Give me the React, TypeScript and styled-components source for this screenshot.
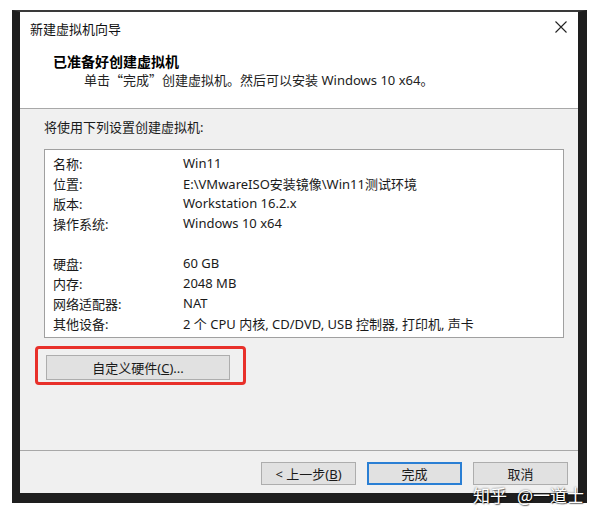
import React from 'react';
import styled, { createGlobalStyle } from 'styled-components';

const GlobalStyle = createGlobalStyle`
  body {
    margin: 0;
    background: #ffffff;
    font-family: 'Segoe UI', 'Noto Sans', 'Noto Sans CJK SC', sans-serif;
    font-size: 13px;
    color: #1a1a1a;
  }
`;

interface Setting {
  label: string;
  value: string;
}

const settings: (Setting | null)[] = [
  { label: '名称:', value: 'Win11' },
  { label: '位置:', value: 'E:\\VMwareISO安装镜像\\Win11测试环境' },
  { label: '版本:', value: 'Workstation 16.2.x' },
  { label: '操作系统:', value: 'Windows 10 x64' },
  null,
  { label: '硬盘:', value: '60 GB' },
  { label: '内存:', value: '2048 MB' },
  { label: '网络适配器:', value: 'NAT' },
  { label: '其他设备:', value: '2 个 CPU 内核, CD/DVD, USB 控制器, 打印机, 声卡' }
];

const Page = styled.div`
  position: relative;
  padding: 10px 13px 14px 12px;
`;

const Window = styled.div`
  box-sizing: border-box;
  height: 493px;
  display: flex;
  flex-direction: column;
  border-top: 2px solid #3a3a3a;
  border-left: 8px solid #1e1e1e;
  border-right: 9px solid #1e1e1e;
  border-bottom: 10px solid #1e1e1e;
`;

const Header = styled.div`
  box-sizing: border-box;
  height: 97px;
  background: #ffffff;
  border-bottom: 1px solid #a8a8a8;
`;

const TitleRow = styled.div`
  height: 32px;
  display: flex;
  align-items: center;
  justify-content: space-between;
  padding: 0 11px 0 10px;
`;

const TitleText = styled.span`
  color: #111;
`;

const CloseIcon = styled.svg`
  width: 12px;
  height: 12px;
  margin-top: -2px;
`;

const Heading = styled.div`
  margin-top: 9px;
  padding-left: 33px;
  line-height: 18px;
  font-size: 14px;
  font-weight: bold;
  color: #000;
`;

const SubHeading = styled.div`
  padding-left: 64px;
  line-height: 18px;
  color: #222;
`;

// full-width punctuation comes from the CJK face
const Cjk = styled.span`
  font-family: 'Noto Sans CJK SC', sans-serif;
`;

const Body = styled.div`
  flex: 1;
  background: #f0f0f0;
  padding: 9px 14px 0 24px;
`;

const Intro = styled.div`
  line-height: 18px;
  margin-bottom: 13px;
`;

const SettingsBox = styled.div`
  box-sizing: border-box;
  height: 189px;
  background: #ffffff;
  border: 1px solid #a0a0a0;
  padding: 3px 8px;
`;

const SettingRow = styled.div`
  display: flex;
  height: 20px;
  align-items: center;
`;

const Label = styled.span`
  width: 130px;
  flex-shrink: 0;
`;

const Highlight = styled.div`
  box-sizing: border-box;
  width: 211px;
  height: 39px;
  margin: 8px 0 0 -9px;
  border: 3px solid #e8302a;
  border-radius: 4px;
  padding: 6px 0 0 8px;
`;

const Button = styled.button<{ $primary?: boolean; $width?: number }>`
  box-sizing: border-box;
  width: ${(p) => p.$width ?? 95}px;
  height: ${(p) => (p.$width ? 25 : 23)}px;
  background: #e1e1e1;
  border: ${(p) => (p.$primary ? '2px solid #2a7fd4' : '1px solid #adadad')};
  font-family: inherit;
  font-size: 13px;
  color: #1a1a1a;
  padding: 0;
  display: flex;
  align-items: center;
  justify-content: center;
`;

const Key = styled.span`
  text-decoration: underline;
`;

const Footer = styled.div`
  box-sizing: border-box;
  height: 43px;
  background: #f0f0f0;
  border-top: 1px solid #a8a8a8;
  display: flex;
  justify-content: flex-end;
  align-items: flex-start;
  padding: 11px 10px 0 0;
  gap: 11px;
`;

const Gap = styled.span<{ $w: number }>`
  display: inline-block;
  width: ${(p) => p.$w}px;
`;

const Watermark = styled.div`
  position: absolute;
  left: 473px;
  top: 482px;
  font-size: 17px;
  color: #ffffff;
  font-family: 'Noto Sans CJK SC', sans-serif;
  text-shadow: 0 0 2px rgba(0, 0, 0, 0.6), 1px 1px 1px rgba(0, 0, 0, 0.5);
  white-space: nowrap;
`;

export default function App() {
  return (
    <Page>
      <GlobalStyle />
      <Window>
        <Header>
          <TitleRow>
            <TitleText>新建虚拟机向导</TitleText>
            <CloseIcon viewBox="0 0 12 12">
              <path d="M0.5 0.5 L11.5 11.5 M11.5 0.5 L0.5 11.5" stroke="#222" strokeWidth="1.1" fill="none" />
            </CloseIcon>
          </TitleRow>
          <Heading>已准备好创建虚拟机</Heading>
          <SubHeading>
            单击<Cjk>“</Cjk>完成<Cjk>”</Cjk>创建虚拟机<Cjk>。</Cjk>然后可以安装 Windows 10 x64<Cjk>。</Cjk>
          </SubHeading>
        </Header>
        <Body>
          <Intro>将使用下列设置创建虚拟机:</Intro>
          <SettingsBox>
            {settings.map((s, i) =>
              s ? (
                <SettingRow key={i}>
                  <Label>{s.label}</Label>
                  <span>{s.value}</span>
                </SettingRow>
              ) : (
                <SettingRow key={i} />
              )
            )}
          </SettingsBox>
          <Highlight>
            <Button $width={184}>
              自定义硬件(<Key>C</Key>)...
            </Button>
          </Highlight>
        </Body>
        <Footer>
          <Button>
            &lt; 上一步(<Key>B</Key>)
          </Button>
          <Button $primary>完成</Button>
          <Button>取消</Button>
        </Footer>
      </Window>
      <Watermark>
        知乎<Gap $w={10} />@一道士
      </Watermark>
    </Page>
  );
}
